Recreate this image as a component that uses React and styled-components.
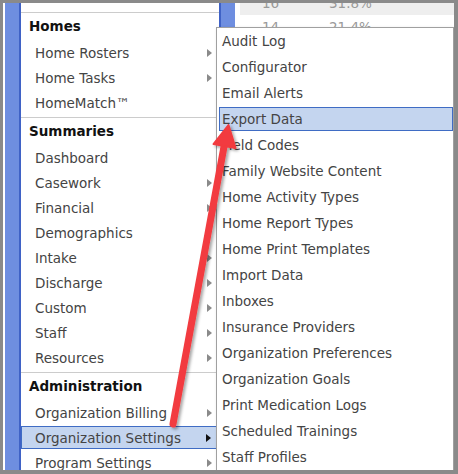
import styled, { createGlobalStyle } from "styled-components";

const GlobalStyle = createGlobalStyle`
  body {
    margin: 0;
    font-family: "DejaVu Sans", Verdana, sans-serif;
  }
`;

const sections = [
  {
    title: "Homes",
    items: [
      { label: "Home Rosters", sub: true },
      { label: "Home Tasks", sub: true },
      { label: "HomeMatch™", sub: false },
    ],
  },
  {
    title: "Summaries",
    items: [
      { label: "Dashboard", sub: false },
      { label: "Casework", sub: true },
      { label: "Financial", sub: true },
      { label: "Demographics", sub: false },
      { label: "Intake", sub: true },
      { label: "Discharge", sub: true },
      { label: "Custom", sub: true },
      { label: "Staff", sub: true },
      { label: "Resources", sub: true },
    ],
  },
  {
    title: "Administration",
    items: [
      { label: "Organization Billing", sub: true },
      { label: "Organization Settings", sub: true, active: true },
      { label: "Program Settings", sub: true },
    ],
  },
];

const settings = [
  "Audit Log",
  "Configurator",
  "Email Alerts",
  "Export Data",
  "Field Codes",
  "Family Website Content",
  "Home Activity Types",
  "Home Report Types",
  "Home Print Templates",
  "Import Data",
  "Inboxes",
  "Insurance Providers",
  "Organization Preferences",
  "Organization Goals",
  "Print Medication Logs",
  "Scheduled Trainings",
  "Staff Profiles",
];

export default function App() {
  return (
    <>
      <GlobalStyle />
      <Frame>
        <Sidebar />
        <Content>
          <DataRow $striped style={{ marginTop: -12 }}>
            <span>16</span>
            <span>31.8%</span>
          </DataRow>
          <DataRow>
            <span>14</span>
            <span>21.4%</span>
          </DataRow>
        </Content>

        <Menu>
          {sections.map((s) => (
            <Section key={s.title}>
              <SectionTitle>{s.title}</SectionTitle>
              {s.items.map((it) => (
                <MenuItem key={it.label} $active={it.active}>
                  <span>{it.label}</span>
                  {it.sub && <Caret $active={it.active} />}
                </MenuItem>
              ))}
            </Section>
          ))}
        </Menu>

        <SubMenu>
          {settings.map((label) => (
            <SubItem key={label} $active={label === "Export Data"}>
              {label}
            </SubItem>
          ))}
        </SubMenu>

        <Pointer viewBox="3 3 451 467">
          <defs>
            <filter id="shade" x="-50%" y="-50%" width="200%" height="200%">
              <feDropShadow dx="2" dy="2" stdDeviation="1.5" floodColor="#000" floodOpacity="0.35" />
            </filter>
          </defs>
          <g filter="url(#shade)" fill="#f23b3f" stroke="#f23b3f">
            <line x1="173" y1="424" x2="224.5" y2="144" strokeWidth="7" strokeLinecap="round" />
            <polygon points="228.5,125 213.5,144 235.5,148" strokeWidth="2" strokeLinejoin="round" />
          </g>
        </Pointer>
      </Frame>
    </>
  );
}

const Frame = styled.div`
  position: relative;
  display: flex;
  width: 458px;
  height: 474px;
  box-sizing: border-box;
  border: 3px solid #8a8a8a;
  border-right-width: 4px;
  border-bottom-width: 4px;
  background: #ffffff;
  overflow: hidden;
`;

const Sidebar = styled.div`
  width: 230px;
  margin-left: 2px;
  background: #6e8ee0;
  flex-shrink: 0;
`;

const Content = styled.div`
  flex: 1;
  padding-left: 5px;
  display: flex;
  flex-direction: column;
`;

const DataRow = styled.div`
  display: flex;
  height: 24px;
  line-height: 24px;
  font-size: 13.5px;
  color: #9a9a9a;
  background: ${(p) => (p.$striped ? "#eeeeee" : "#ffffff")};
  span:first-child {
    width: 67px;
    padding-left: 22px;
  }
`;

const Menu = styled.div`
  position: absolute;
  left: 16px;
  top: 0;
  width: 202px;
  box-sizing: border-box;
  padding-top: 9px;
  background: #ffffff;
  border-left: 2px solid #3f62c6;
  border-right: 2px solid #3f62c6;
`;

const Section = styled.div`
  border-top: 1px solid #cccccc;
  padding-bottom: 2px;
`;

const SectionTitle = styled.div`
  height: 27px;
  line-height: 27px;
  padding-left: 8px;
  font-size: 13.5px;
  font-weight: bold;
  color: #111111;
`;

const MenuItem = styled.div`
  display: flex;
  align-items: center;
  justify-content: space-between;
  box-sizing: border-box;
  height: ${(p) => (p.$active ? "23px" : "25px")};
  margin: ${(p) => (p.$active ? "1px 0" : "0")};
  padding: 0 7px 0 ${(p) => (p.$active ? "13px" : "14px")};
  font-size: 13.5px;
  color: #444444;
  background: ${(p) => (p.$active ? "#c4d5ef" : "transparent")};
  border: ${(p) => (p.$active ? "1px solid #3f6cc4" : "none")};
`;

const Caret = styled.i`
  width: 0;
  height: 0;
  border-top: 4.5px solid transparent;
  border-bottom: 4.5px solid transparent;
  border-left: 5px solid ${(p) => (p.$active ? "#111111" : "#8a8a8a")};
`;

const SubMenu = styled.div`
  position: absolute;
  left: 213px;
  top: 24px;
  width: 238px;
  box-sizing: border-box;
  background: #ffffff;
  border: 1px solid #a0a0a0;
  box-shadow: 1px 1px 3px rgba(0, 0, 0, 0.15);
`;

const SubItem = styled.div`
  box-sizing: border-box;
  height: ${(p) => (p.$active ? "24px" : "26px")};
  line-height: ${(p) => (p.$active ? "22px" : "26px")};
  margin: ${(p) => (p.$active ? "1px 0 1px 2px" : "0")};
  padding-left: ${(p) => (p.$active ? "2px" : "5px")};
  font-size: 13.5px;
  color: #444444;
  white-space: nowrap;
  background: ${(p) => (p.$active ? "#c4d5ef" : "transparent")};
  border: ${(p) => (p.$active ? "1px solid #3f6cc4" : "none")};
`;

const Pointer = styled.svg`
  position: absolute;
  left: 0;
  top: 0;
  width: 451px;
  height: 467px;
  pointer-events: none;
  overflow: visible;
`;
